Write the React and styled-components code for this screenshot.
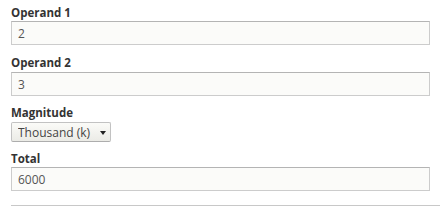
import React from 'react'
import styled, { createGlobalStyle } from 'styled-components'

const GlobalStyle = createGlobalStyle`
  body {
    margin: 0;
    background: #fff;
    font-family: "Open Sans", "Liberation Sans", sans-serif;
    color: #333;
  }
`

const Form = styled.form`
  padding: 5px 0 0 11px;
  overflow: hidden;
`

const FormItem = styled.div`
  margin-bottom: ${(p) => p.gap ?? 9}px;
`

const Label = styled.label`
  display: block;
  font-size: 11.5px;
  line-height: 15px;
  font-weight: 700;
  color: #333;
  margin-bottom: ${(p) => p.space || 1}px;
`

const TextInput = styled.input`
  display: block;
  box-sizing: border-box;
  width: 419px;
  height: 24px;
  margin: 0;
  padding: 0 6px;
  border: 1px solid #ccc;
  border-top-color: #b4b4b4;
  background: #fbfbf9;
  font-family: inherit;
  font-size: 12px;
  color: #555;
  outline: none;
`

const SelectWrap = styled.div`
  position: relative;
  width: fit-content;

  &::after {
    content: '';
    position: absolute;
    right: 5px;
    top: 9px;
    border-left: 3.5px solid transparent;
    border-right: 3.5px solid transparent;
    border-top: 4.5px solid #222;
    pointer-events: none;
  }
`

const Select = styled.select`
  appearance: none;
  display: block;
  box-sizing: border-box;
  width: 100px;
  height: 20px;
  margin: 0;
  padding: 0 14px 0 6px;
  border: 1px solid #c2c2c2;
  border-bottom-color: #adadad;
  border-radius: 2px;
  background: linear-gradient(to bottom, #fbfbf8, #ebebe6);
  font-family: inherit;
  font-size: 12px;
  color: #444;
  outline: none;
`

const Rule = styled.div`
  height: 1px;
  background: #c8c8c8;
  margin-top: 14px;
`

const App = () => {
  return (
    <>
      <GlobalStyle />
      <Form>
        <FormItem gap={10}>
          <Label>Operand 1</Label>
          <TextInput defaultValue="2" />
        </FormItem>
        <FormItem>
          <Label space={2}>Operand 2</Label>
          <TextInput defaultValue="3" />
        </FormItem>
        <FormItem>
          <Label space={2}>Magnitude</Label>
          <SelectWrap>
            <Select defaultValue="k">
              <option value="u">Units</option>
              <option value="k">Thousand (k)</option>
              <option value="m">Million (M)</option>
            </Select>
          </SelectWrap>
        </FormItem>
        <FormItem gap={0}>
          <Label>Total</Label>
          <TextInput defaultValue="6000" />
        </FormItem>
        <Rule />
      </Form>
    </>
  )
}

export default App
